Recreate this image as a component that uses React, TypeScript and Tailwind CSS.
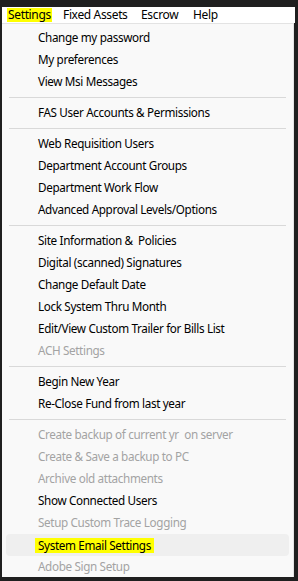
import React from "react";

type Item = { label: string; disabled?: boolean; active?: boolean } | "sep";

const items: Item[] = [
  { label: "Change my password" },
  { label: "My preferences" },
  { label: "View Msi Messages" },
  "sep",
  { label: "FAS User Accounts & Permissions" },
  "sep",
  { label: "Web Requisition Users" },
  { label: "Department Account Groups" },
  { label: "Department Work Flow" },
  { label: "Advanced Approval Levels/Options" },
  "sep",
  { label: "Site Information &  Policies" },
  { label: "Digital (scanned) Signatures" },
  { label: "Change Default Date" },
  { label: "Lock System Thru Month" },
  { label: "Edit/View Custom Trailer for Bills List" },
  { label: "ACH Settings", disabled: true },
  "sep",
  { label: "Begin New Year" },
  { label: "Re-Close Fund from last year" },
  "sep",
  { label: "Create backup of current yr  on server", disabled: true },
  { label: "Create & Save a backup to PC", disabled: true },
  { label: "Archive old attachments", disabled: true },
  { label: "Show Connected Users" },
  { label: "Setup Custom Trace Logging", disabled: true },
  { label: "System Email Settings", active: true },
  { label: "Adobe Sign Setup", disabled: true },
];

export default function App() {
  return (
    <div
      className="w-[298px] h-[581px] bg-[#1f1f1f] pt-[7px] pl-[2px] pr-[3px] pb-[4px] flex flex-col overflow-hidden tracking-[-0.35px]"
      style={{ fontFamily: '"Noto Sans", "Open Sans", sans-serif' }}
    >
      <div className="h-[16px] bg-white flex items-center text-[12px] text-black whitespace-pre shrink-0">
        <span className="ml-[5px] w-[45px] bg-[#ffff00] pl-[1px] h-[14px] leading-[14px]">Settings</span>
        <span className="ml-[11px] w-[78px] leading-[14px]">Fixed Assets</span>
        <span className="w-[52px] leading-[14px]">Escrow</span>
        <span className="leading-[14px]">Help</span>
      </div>
      <div className="flex-1 bg-[#f9f9f9] border-r border-t border-[#e3e3e3] mr-[1px] overflow-hidden pt-[3px]">
        {items.map((it, i) =>
          it === "sep" ? (
            <div key={i} className="h-[9px] flex items-center px-[7px]">
              <div className="h-px w-full bg-[#d9d9d9]" />
            </div>
          ) : (
            <div
              key={i}
              className={
                "h-[22px] flex items-center text-[11.7px] whitespace-pre mx-[4px] rounded-[4px] " +
                (it.active ? "bg-[#efefef]" : "") +
                (it.disabled ? " text-[#a3a3a3]" : " text-black")
              }
            >
              {it.active ? (
                <span className="ml-[29px] bg-[#ffff00] px-[3px] h-[15px] leading-[15px]">{it.label}</span>
              ) : (
                <span className="ml-[32px]">{it.label}</span>
              )}
            </div>
          )
        )}
      </div>
    </div>
  );
}
